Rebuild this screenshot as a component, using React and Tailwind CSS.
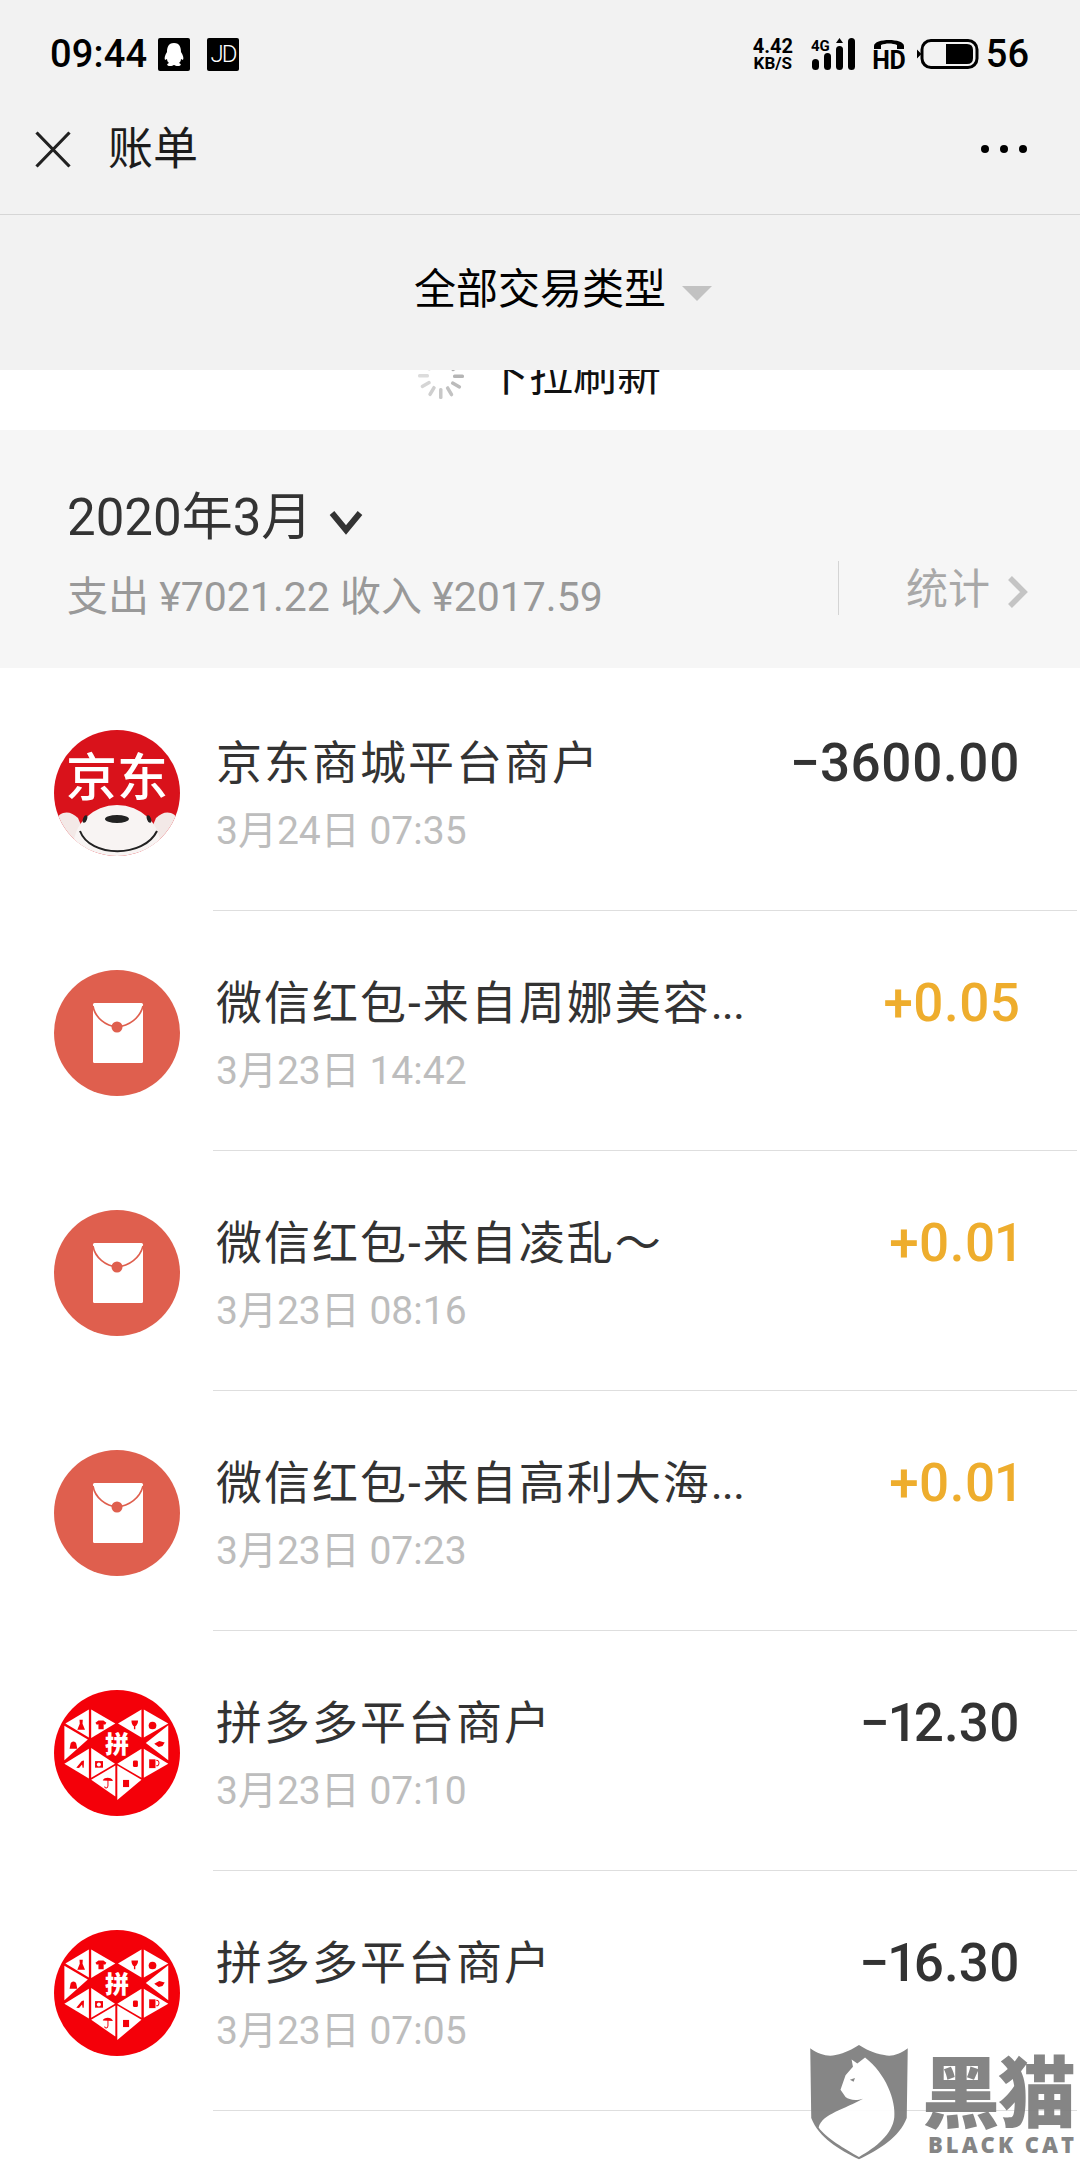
const FONT = "font-['Roboto','Noto_Sans_CJK_SC',sans-serif]";

function JdLogo() {
  return (
    <svg width="126" height="126" viewBox="0 0 126 126" className="shrink-0">
      <defs>
        <clipPath id="jdc"><circle cx="63" cy="63" r="63" /></clipPath>
      </defs>
      <g clipPath="url(#jdc)">
        <rect width="126" height="126" fill="#d9121b" />
        <text x="63" y="66" textAnchor="middle" fontSize="51" fontWeight="500" fill="#fff" fontFamily="'Noto Sans CJK SC',sans-serif">京东</text>
        <path d="M0 126 L0 92 C6 80 16 80 24 88 L40 126 Z" fill="#f3e9e7" />
        <path d="M126 126 L126 92 C120 80 110 80 102 88 L86 126 Z" fill="#f3e9e7" />
        <ellipse cx="63" cy="118" rx="44" ry="43" fill="#f8f4f3" />
        <ellipse cx="63" cy="89" rx="12" ry="4" fill="#222" />
        <ellipse cx="31" cy="89" rx="2" ry="4" fill="#222" transform="rotate(20 31 89)" />
        <ellipse cx="95" cy="89" rx="2" ry="4" fill="#222" transform="rotate(-20 95 89)" />
        <path d="M26 101 C36 128 90 128 103 101" fill="none" stroke="#222" strokeWidth="2" />
      </g>
    </svg>
  );
}

function Envelope() {
  return (
    <svg width="126" height="126" viewBox="0 0 126 126" className="shrink-0">
      <circle cx="63" cy="63" r="63" fill="#df5f4e" />
      <rect x="39" y="33" width="50" height="60" rx="1.5" fill="#fff" />
      <path d="M39 36 C41 48 52 56 63 57 C75 56 86 48 89 36" fill="none" stroke="#df5f4e" strokeWidth="1.6" />
      <circle cx="63" cy="57" r="5.5" fill="#df5f4e" />
    </svg>
  );
}

function Small({ cx, cy, children }) {
  return <g transform={`translate(${cx} ${cy}) scale(0.82) translate(${-cx} ${-cy})`}>{children}</g>;
}

function PddLogo() {
  const tris = [
    "148,88 78,130 148,172",
    "155,88 227,130 155,173",
    "75,137 145,178 75,240",
    "75,250 148,205 148,294",
    "155,203 226,250 155,292",
    "155,298 227,255 227,348",
    "233,255 305,298 233,358",
    "233,250 305,205 305,292",
    "312,205 385,250 312,292",
    "385,135 385,240 318,188",
    "312,88 385,130 312,172",
    "305,88 235,130 305,172",
  ];
  return (
    <svg width="126" height="126" viewBox="44 30 376 376" className="shrink-0">
      <circle cx="232" cy="218" r="188" fill="#f40009" />
      {tris.map((p) => <polygon key={p} points={p} fill="#fff" />)}
      <g fill="#f40009">
        <Small cx={125} cy={134}><path d="M119 115 L131 115 L130 130 L139 152 L111 152 L120 130 Z" /></Small>
        <Small cx={184} cy={134}><path d="M164 126 L175 118 L193 118 L204 126 L199 134 L194 132 L194 150 L175 150 L175 132 L169 134 Z" /></Small>
        <Small cx={102} cy={194}><path d="M88 208 L91 192 C93 178 111 178 113 192 L116 208 Z" /></Small>
        <Small cx={122} cy={252}><path d="M108 264 L128 240 L136 238 L135 264 L131 264 L129 252 L118 265 Z" /></Small>
        <Small cx={178} cy={252}><path d="M164 240 L193 240 L193 264 L164 264 Z" /></Small>
        <Small cx={205} cy={300}><path d="M186 300 C190 286 220 286 223 302 Z" /></Small>
        <Small cx={259} cy={309}><rect x="248" y="296" width="22" height="26" /></Small>
        <Small cx={287} cy={250}><rect x="278" y="238" width="18" height="24" rx="5" /></Small>
        <Small cx={337} cy={250}><path d="M326 234 L349 234 L349 266 L326 266 Z" /></Small>
        <Small cx={358} cy={191}><path d="M340 190 L358 180 L378 186 L370 198 L356 202 Z" /></Small>
        <Small cx={338} cy={136}><circle cx="338" cy="136" r="14" /></Small>
        <Small cx={285} cy={134}><path d="M273 118 L297 118 C297 132 290 137 287 139 L287 150 L282 150 L282 139 C279 137 273 132 273 118 Z" /></Small>
      </g>
      <g fill="none" stroke="#f40009" strokeWidth="3">
        <path d="M349 240 C360 238 360 258 349 256" />
        <path d="M205 298 L205 316 C205 324 196 324 195 318" />
      </g>
      <circle cx="178" cy="252" r="6" fill="#fff" />
      <text x="232" y="218" textAnchor="middle" fontSize="72" fontWeight="900" fill="#fff" fontFamily="'Noto Sans CJK SC',sans-serif">拼</text>
    </svg>
  );
}

const rows = [
  { icon: <JdLogo />, title: "京东商城平台商户", date: "3月24日 07:35", amount: "−3600.00" },
  { icon: <Envelope />, title: "微信红包-来自周娜美容", more: true, date: "3月23日 14:42", amount: "+0.05", income: true },
  { icon: <Envelope />, title: "微信红包-来自凌乱～", date: "3月23日 08:16", amount: "+0.01", income: true },
  { icon: <Envelope />, title: "微信红包-来自高利大海", more: true, date: "3月23日 07:23", amount: "+0.01", income: true },
  { icon: <PddLogo />, title: "拼多多平台商户", date: "3月23日 07:10", amount: "−12.30" },
  { icon: <PddLogo />, title: "拼多多平台商户", date: "3月23日 07:05", amount: "−16.30" },
];

function StatusBar() {
  return (
    <div className="h-[84px] pt-[24px] flex items-center pl-[50px]">
      <span className="text-[38px] leading-none font-medium text-black tracking-[0.2px] w-[108px]">09:44</span>
      <svg width="32" height="33" viewBox="0 0 32 33" className="shrink-0">
        <rect width="32" height="33" rx="2" fill="#000" />
        <path d="M16 5 C10 5 9 10 9 14 C7 17 6 20 7 22 L9 21 C9 23 10 24 11 25 C8 26 9 28 12 28 C14 28 15 27.5 16 27 C17 27.5 18 28 20 28 C23 28 24 26 21 25 C22 24 23 23 23 21 L25 22 C26 20 25 17 23 14 C23 10 22 5 16 5 Z" fill="#fff" />
      </svg>
      <span className="ml-[17px] w-[32px] h-[33px] bg-black rounded-[2px] flex items-center justify-center text-white text-[24px] leading-none font-light tracking-[-2px]">JD</span>
      <div className="ml-auto flex items-center pr-[51px]">
        <div className="flex flex-col items-center w-[44px] font-bold text-black">
          <span className="text-[20px] leading-[17px]">4.42</span>
          <span className="text-[17px] leading-[16px]">KB/S</span>
        </div>
        <svg width="44" height="34" viewBox="0 0 44 34" className="ml-[16px] shrink-0">
          <text x="0" y="14" fontSize="15" fontWeight="700" fill="#000" fontFamily="Roboto,sans-serif">4G</text>
          <rect x="1" y="22" width="7" height="11" rx="3.5" fill="#000" />
          <rect x="13" y="16" width="7" height="17" rx="3.5" fill="#000" />
          <rect x="25" y="9" width="7" height="24" rx="3.5" fill="#000" />
          <rect x="37" y="1" width="7" height="32" rx="3.5" fill="#000" />
          <path d="M28.5 1 L32 6 L25 6 Z" fill="#000" />
        </svg>
        <div className="ml-[17px] w-[34px] flex flex-col items-center shrink-0">
          <svg width="34" height="14" viewBox="0 0 34 14">
            <path d="M2 12 L2 9 C2 1 32 1 32 9 L32 12 L25 12 L25 8 C20 6 14 6 9 8 L9 12 Z" fill="#000" />
          </svg>
          <span className="text-[25px] leading-[20px] font-bold text-black tracking-[-0.5px]">HD</span>
        </div>
        <svg width="62" height="30" viewBox="0 0 62 30" className="ml-[11px] shrink-0">
          <path d="M3 15 L1 13 L1 17 Z" fill="#000" stroke="#000" strokeWidth="2" />
          <rect x="5" y="1.5" width="55" height="27" rx="9" fill="none" stroke="#000" strokeWidth="3" />
          <path d="M29 5 L50 5 Q56 5 56 11 L56 19 Q56 25 50 25 L29 25 Z" fill="#000" />
        </svg>
        <span className="ml-[7px] text-[38px] leading-none font-medium text-black">56</span>
      </div>
    </div>
  );
}

function Spinner() {
  const spokes = [0, 30, 60, 90, 120, 150, 180, 210, 240, 270, 300, 330];
  const tone = ["#bbb", "#a8a8a8", "#b0b0b0", "#b5b5b5", "#bbb", "#c2c2c2", "#c8c8c8", "#cfcfcf", "#d5d5d5", "#dcdcdc", "#e2e2e2", "#e8e8e8"];
  return (
    <svg width="48" height="48" viewBox="0 0 48 48" className="shrink-0">
      {spokes.map((a, i) => (
        <rect key={a} x="22.5" y="1" width="3.5" height="11" rx="1.5" fill={tone[i]} transform={`rotate(${a} 24 24)`} />
      ))}
    </svg>
  );
}

function Watermark() {
  return (
    <div className="absolute right-0 bottom-0 w-[270px] h-[115px] opacity-95 flex">
      <svg width="98" height="115" viewBox="65 45 290 342" className="shrink-0">
        <path d="M65 55 C90 75 120 80 140 75 C170 68 190 58 210 45 C230 58 250 68 285 75 C305 80 330 75 355 55 L352 262 C330 320 270 355 210 385 C150 355 90 320 68 262 Z" fill="#808080" />
        <path d="M188 88 L205 100 L228 82 C290 130 320 210 315 260 C310 310 260 350 210 378 C170 355 110 320 90 290 C100 250 170 235 222 205 C200 212 180 208 170 200 L155 178 L170 135 L192 110 Z" fill="#fff" />
        <path d="M183 148 L198 143 L194 154 Z" fill="#808080" />
      </svg>
      <div className="ml-[14px] flex flex-col items-start">
        <span className="text-[78px] leading-[86px] font-black text-[#7f7f7f] tracking-[-2px] font-['Noto_Sans_CJK_SC',sans-serif] whitespace-nowrap">黑猫</span>
        <span className="ml-[6px] text-[22px] leading-[18px] mt-[4px] font-black text-[#7f7f7f] tracking-[3px] font-['Open_Sans',sans-serif] whitespace-nowrap">BLACK CAT</span>
      </div>
    </div>
  );
}

export default function App() {
  return (
    <div className={`relative w-[1080px] h-[2160px] overflow-hidden bg-white ${FONT}`}>
      <div className="bg-[#f2f2f2] h-[215px] border-b border-[#d6d6d6]">
        <StatusBar />
        <div className="h-[130px] flex items-center pl-[35px] pr-[53px]">
          <svg width="36" height="37" viewBox="0 0 36 37" className="shrink-0">
            <path d="M1.5 1.5 L34.5 35.5 M34.5 1.5 L1.5 35.5" stroke="#222" strokeWidth="3.2" fill="none" />
          </svg>
          <span className="ml-[37px] text-[45px] leading-none text-[#1c1c1c]">账单</span>
          <div className="ml-auto flex gap-[11px]">
            <span className="w-[8px] h-[8px] rounded-full bg-black" />
            <span className="w-[8px] h-[8px] rounded-full bg-black" />
            <span className="w-[8px] h-[8px] rounded-full bg-black" />
          </div>
        </div>
      </div>
      <div className="bg-[#f2f2f2] h-[155px] flex items-start pt-[49px] pl-[414px]">
        <span className="text-[42px] leading-[52px] text-black">全部交易类型</span>
        <span className="ml-[16px] mt-[22px] w-0 h-0 border-l-[15px] border-r-[15px] border-t-[15px] border-l-transparent border-r-transparent border-t-[#c2c2c2]" />
      </div>
      <div className="h-[60px] bg-white overflow-hidden">
        <div className="h-[48px] -mt-[18px] flex items-center pl-[417px]">
          <Spinner />
          <span className="ml-[20px] text-[44px] leading-none text-[#111]">下拉刷新</span>
        </div>
      </div>
      <div className="h-[238px] bg-[#f6f6f6] relative pl-[67px] pt-[58px]">
        <div className="flex items-center">
          <span className="text-[51px] leading-[60px] text-[#333]">2020年3月</span>
          <svg width="34" height="28" viewBox="0 0 34 28" className="ml-[17px] mt-[8px]">
            <path d="M3 5 L17 22 L31 5" fill="none" stroke="#333" strokeWidth="6" />
          </svg>
        </div>
        <div className="mt-[24px] text-[41px] leading-[50px] text-[#999] whitespace-nowrap">支出 ¥7021.22 收入 ¥2017.59</div>
        <div className="absolute left-[838px] top-[131px] h-[54px] w-[1px] bg-[#d4d4d4]" />
        <div className="absolute left-[906px] top-[135px] flex items-center">
          <span className="text-[42px] leading-[50px] text-[#a8a8a8]">统计</span>
          <svg width="26" height="36" viewBox="0 0 26 36" className="ml-[15px] mt-[4px]">
            <path d="M5 4 L19 18 L5 32" fill="none" stroke="#c4c4c4" strokeWidth="5.5" />
          </svg>
        </div>
      </div>
      <div className="pt-[3px]">
        {rows.map((r, i) => (
          <div key={i} className="h-[240px] flex pl-[54px] pt-[59px] relative">
            {r.icon}
            <div className="ml-[36px] flex-1 flex flex-col items-start min-w-0">
              <span className="text-[46px] leading-[56px] mt-[5px] text-[#333] tracking-[2px] whitespace-nowrap">
                {r.title}
                {r.more ? <span className="tracking-[-1px]">...</span> : null}
              </span>
              <span className="mt-[17px] text-[39px] leading-[46px] text-[#bdbdbd] whitespace-nowrap">{r.date}</span>
            </div>
            <span className={`absolute right-[60px] top-[62px] text-[53px] leading-[60px] font-medium proportional-nums ${r.income ? "text-[#eead2d]" : "text-[#333]"}`}>{r.amount}</span>
            <div className="absolute left-[213px] right-[3px] bottom-0 h-[1px] bg-[#dedede]" />
          </div>
        ))}
      </div>
      <Watermark />
    </div>
  );
}
